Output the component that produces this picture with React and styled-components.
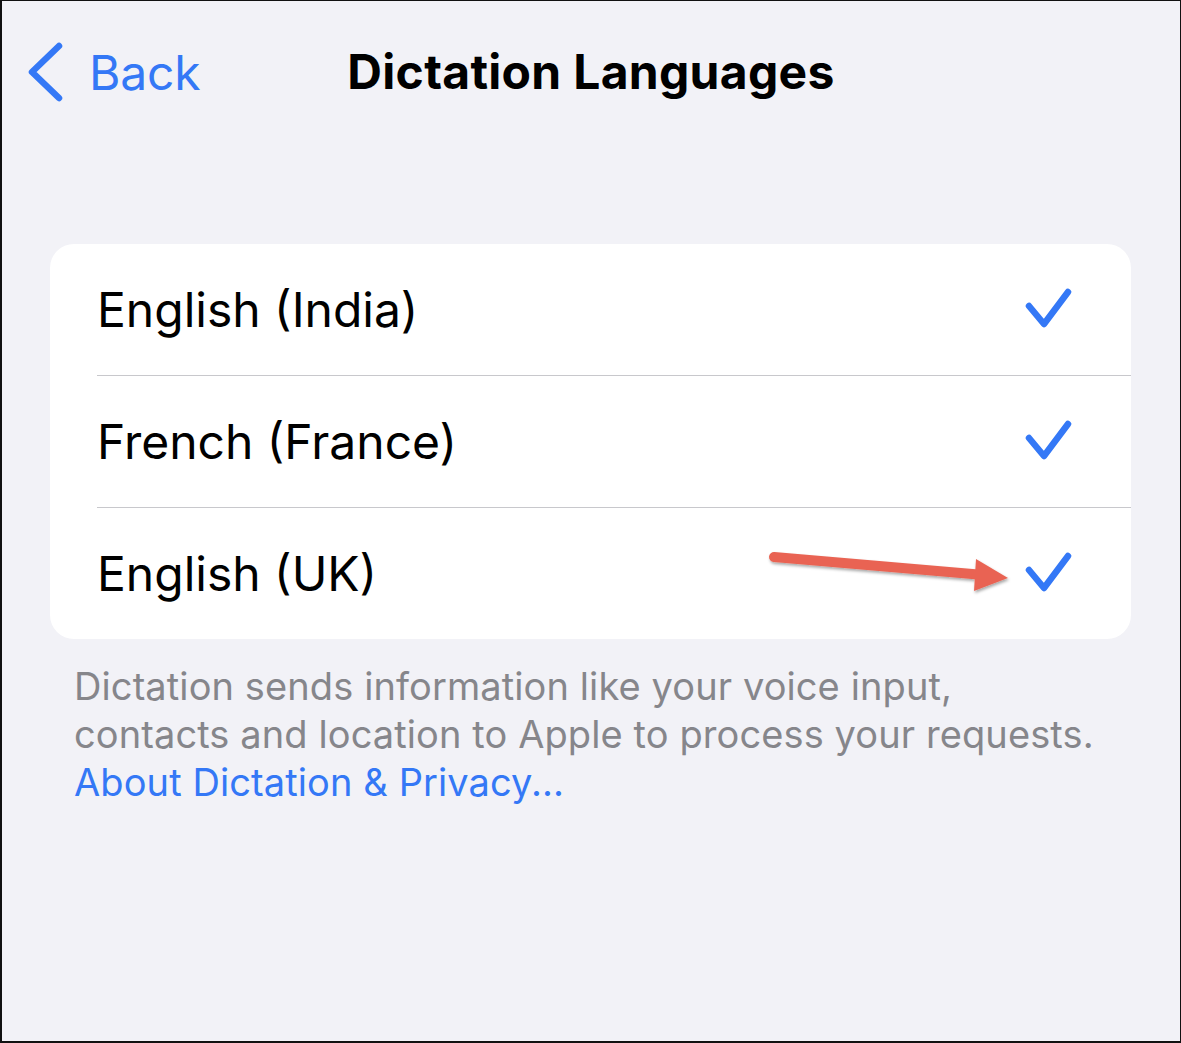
import React from "react"
import styled, { createGlobalStyle } from "styled-components"

const GlobalStyle = createGlobalStyle`
  html, body {
    margin: 0;
    padding: 0;
  }
  body {
    font-family: Inter, "Open Sans", "Liberation Sans", sans-serif;
    background: #f2f2f7;
  }
`

const Screen = styled.div`
  position: relative;
  width: 1181px;
  height: 1043px;
  box-sizing: border-box;
  background: #f2f2f7;
  border: 1px solid #111;
  border-left-width: 2px;
  border-bottom-width: 2px;
  overflow: hidden;
`

const NavBar = styled.div`
  position: relative;
  height: 146px;
  display: flex;
  align-items: center;
  justify-content: center;
`

const BackButton = styled.div`
  position: absolute;
  left: 23px;
  top: 41px;
  display: flex;
  align-items: center;
  gap: 24px;
  color: #3478f6;
  font-size: 48px;
  letter-spacing: -0.2px;
`

const Title = styled.div`
  font-size: 48px;
  font-weight: 700;
  color: #000;
  letter-spacing: 0.3px;
  margin-top: -6px;
`

const Content = styled.div`
  padding: 97px 49px 0 48px;
`

const Card = styled.div`
  position: relative;
  background: #fff;
  border-radius: 24px;
  overflow: hidden;
`

const Row = styled.div`
  height: 131px;
  display: flex;
  align-items: center;
  justify-content: space-between;
  padding: 0 58px 0 48px;
  border-top: ${p => (p.first ? "none" : "1px solid #c8c8cc")};
  margin-left: ${p => (p.first ? "0" : "47px")};
  padding-left: ${p => (p.first ? "47px" : "0")};
`

const Label = styled.div`
  font-size: 48px;
  color: #000;
  letter-spacing: 0;
`

const Footer = styled.div`
  padding: 23px 30px 0 24px;
  font-size: 38px;
  line-height: 48px;
  color: #86868b;
  letter-spacing: 0.1px;
`

const FooterLink = styled.span`
  color: #3478f6;
`

const Arrow = styled.svg`
  position: absolute;
  left: 760px;
  top: 540px;
  overflow: visible;
`

function Chevron() {
  return (
    <svg width="40" height="60" viewBox="0 0 40 60">
      <path d="M34 4 L7 30 L34 56" fill="none" stroke="#3478f6" strokeWidth="6.5" strokeLinecap="round" strokeLinejoin="round" />
    </svg>
  )
}

function Check() {
  return (
    <svg width="48" height="48" viewBox="0 0 48 48">
      <path d="M4 20 L19 38 L43 6" fill="none" stroke="#3478f6" strokeWidth="6.5" strokeLinecap="round" strokeLinejoin="round" />
    </svg>
  )
}

const languages = ["English (India)", "French (France)", "English (UK)"]

export default function App() {
  return (
    <>
      <GlobalStyle />
      <Screen>
        <NavBar>
          <BackButton>
            <Chevron />
            <span>Back</span>
          </BackButton>
          <Title>Dictation Languages</Title>
        </NavBar>
        <Content>
          <Card>
            {languages.map((lang, i) => (
              <Row key={lang} first={i === 0}>
                <Label>{lang}</Label>
                <Check />
              </Row>
            ))}
          </Card>
          <Footer>
            Dictation sends information like your voice input,<br />
            contacts and location to Apple to process your requests.<br />
            <FooterLink>About Dictation &amp; Privacy...</FooterLink>
          </Footer>
        </Content>
        <Arrow width="260" height="60">
          <defs>
            <filter id="arrowShadow" x="-10%" y="-50%" width="120%" height="200%">
              <feDropShadow dx="1" dy="2" stdDeviation="1.5" floodColor="#000" floodOpacity="0.35" />
            </filter>
          </defs>
          <g filter="url(#arrowShadow)">
            <line x1="12" y1="16" x2="222" y2="34" stroke="#e96453" strokeWidth="10" strokeLinecap="round" />
            <path d="M214 18 L246 37 L212 50 Z" fill="#e96453" />
          </g>
        </Arrow>
      </Screen>
    </>
  )
}
